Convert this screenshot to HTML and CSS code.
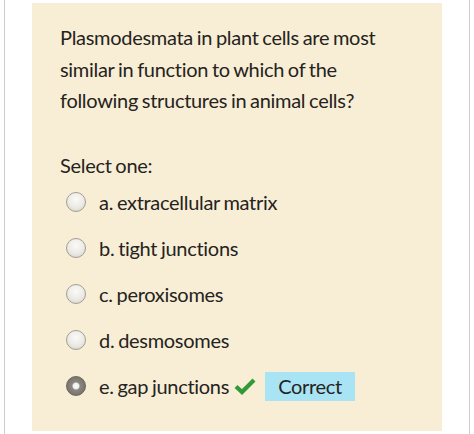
FILE: index.html
```html
<!DOCTYPE html>
<html lang="en">
<head>
    <meta charset="UTF-8">
    <title>Question</title>
    <link rel="stylesheet" href="styles.css">
</head>
<body>
    <div class="frame">
        <div class="question">
            <p class="qtext">Plasmodesmata in plant cells are most<br>similar in function to which of the<br>following structures in animal cells?</p>

            <p class="prompt">Select one:</p>
            <div class="answers">
                <label class="option"><span class="radio"></span>a. extracellular matrix</label>
                <label class="option"><span class="radio"></span>b. tight junctions</label>
                <label class="option"><span class="radio"></span>c. peroxisomes</label>
                <label class="option"><span class="radio"></span>d. desmosomes</label>
                <label class="option checked">
                    <span class="radio"></span>e. gap junctions
                    <svg class="tick" width="22" height="18" viewBox="0 0 22 18">
                        <path d="M2 9.5 L8 15 L20 3" fill="none" stroke="#2f9a36" stroke-width="4.2" stroke-linejoin="miter"/>
                    </svg>
                    <span class="badge">Correct</span>
                </label>
            </div>
        </div>
    </div>
</body>
</html>
```

FILE: styles.css
```css
/* Base */
* {
    box-sizing: border-box;
    margin: 0;
    padding: 0;
}

body {
    background-color: #fff;
    font-family: Lato, "Open Sans", sans-serif;
    color: #25231d;
}

/* Outer frame */
.frame {
    margin: 0 4px 0 4px;
    height: 434px;
    border-left: 1px solid #cdcdcd;
    border-right: 1px solid #cdcdcd;
    padding: 3px 27px;
}

/* Question panel */
.question {
    background-color: #f8eed6;
    height: 428px;
    padding: 19px 20px 0 28px;
    font-size: 20px;
    letter-spacing: -0.3px;
    word-spacing: -1px;
}

.qtext {
    line-height: 31.5px;
}

.prompt {
    margin-top: 33px;
    line-height: 31.5px;
}

.answers {
    display: flex;
    flex-direction: column;
    gap: 14px;
    margin-top: 5px;
}

.option {
    display: flex;
    align-items: center;
    height: 32px;
    padding-left: 6px;
}

.radio {
    width: 20px;
    height: 20px;
    border-radius: 50%;
    border: 1px solid #a39e94;
    background: radial-gradient(circle at 50% 35%, #fbfaf7 0%, #eceae5 55%, #d2cfc8 100%);
    margin-right: 13px;
    flex-shrink: 0;
}

.option.checked .radio {
    border-color: #6c675f;
    background: radial-gradient(circle at 50% 50%, #fafafa 0%, #f0f0f0 22%, #8d887f 32%, #7a756c 70%, #5f5a52 100%);
}

.tick {
    margin-left: 5px;
}

.badge {
    margin-left: 9px;
    background-color: #a9e4f5;
    height: 29px;
    line-height: 29px;
    width: 90px;
    text-align: center;
}
```
